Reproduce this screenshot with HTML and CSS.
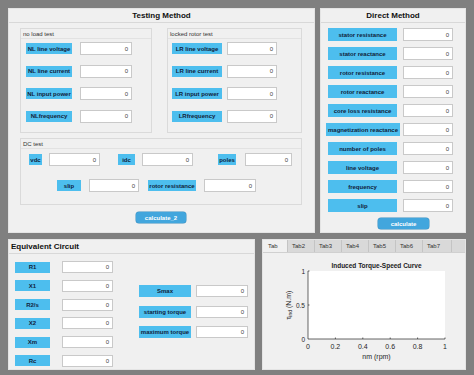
FILE: index.html
```html
<!DOCTYPE html>
<html>
<head>
<meta charset="utf-8">
<link rel="stylesheet" href="styles.css">
</head>
<body>
<div class="app">
  <div class="top">
    <section class="panel testing">
      <div class="ptitle">Testing Method</div>
      <div class="testing-body">
        <div class="toprow">
          <div class="group noload">
            <div class="gtitle">no load test</div>
            <div class="rows">
              <div class="row"><span class="lbl w46">NL line voltage</span><span class="inp w52">0</span></div>
              <div class="row"><span class="lbl w46">NL line current</span><span class="inp w52">0</span></div>
              <div class="row"><span class="lbl w46">NL input power</span><span class="inp w52">0</span></div>
              <div class="row"><span class="lbl w46">NLfrequency</span><span class="inp w52">0</span></div>
            </div>
          </div>
          <div class="group locked">
            <div class="gtitle">locked rotor test</div>
            <div class="rows">
              <div class="row"><span class="lbl w50">LR line voltage</span><span class="inp w50">0</span></div>
              <div class="row"><span class="lbl w50">LR line current</span><span class="inp w50">0</span></div>
              <div class="row"><span class="lbl w50">LR input power</span><span class="inp w50">0</span></div>
              <div class="row"><span class="lbl w50">LRfrequency</span><span class="inp w50">0</span></div>
            </div>
          </div>
        </div>
        <div class="group dc">
          <div class="gtitle">DC test</div>
          <div class="dcrow dc1">
            <span class="lbl sm w13">vdc</span><span class="inp w51">0</span>
            <span class="lbl sm w17 ml11">idc</span><span class="inp w51">0</span>
            <span class="lbl sm w18 ml18">poles</span><span class="inp w47 g9">0</span>
          </div>
          <div class="dcrow dc2">
            <span class="lbl sm w24">slip</span><span class="inp w50">0</span>
            <span class="lbl sm w48 ml1">rotor resistance</span><span class="inp w52">0</span>
          </div>
        </div>
        <div class="btnrow"><button class="btn b2">calculate_2</button></div>
      </div>
    </section>
    <section class="panel direct">
      <div class="ptitle">Direct Method</div>
      <div class="direct-body">
        <div class="dgrid">
          <span class="lbl dl">stator resistance</span><span class="inp">0</span>
          <span class="lbl dl">stator reactance</span><span class="inp">0</span>
          <span class="lbl dl">rotor resistance</span><span class="inp">0</span>
          <span class="lbl dl">rotor reactance</span><span class="inp">0</span>
          <span class="lbl dl">core loss resistance</span><span class="inp">0</span>
          <span class="lbl dl wide">magnetization reactance</span><span class="inp">0</span>
          <span class="lbl dl">number of poles</span><span class="inp">0</span>
          <span class="lbl dl">line voltage</span><span class="inp">0</span>
          <span class="lbl dl">frequency</span><span class="inp">0</span>
          <span class="lbl dl">slip</span><span class="inp">0</span>
        </div>
        <button class="btn b1">calculate</button>
      </div>
    </section>
  </div>
  <div class="bottom">
    <section class="panel equiv">
      <div class="ptitle left">Equivalent Circuit</div>
      <div class="equiv-body">
        <div class="ecol">
          <div class="erow"><span class="lbl w35">R1</span><span class="inp w51">0</span></div>
          <div class="erow"><span class="lbl w35">X1</span><span class="inp w51">0</span></div>
          <div class="erow"><span class="lbl w35">R2/s</span><span class="inp w51">0</span></div>
          <div class="erow"><span class="lbl w35">X2</span><span class="inp w51">0</span></div>
          <div class="erow"><span class="lbl w35">Xm</span><span class="inp w51">0</span></div>
          <div class="erow"><span class="lbl w35">Rc</span><span class="inp w51">0</span></div>
        </div>
        <div class="rcol">
          <div class="rrow"><span class="lbl w52">Smax</span><span class="inp w52">0</span></div>
          <div class="rrow"><span class="lbl w52">starting torque</span><span class="inp w52">0</span></div>
          <div class="rrow"><span class="lbl w52">maximum torque</span><span class="inp w52">0</span></div>
        </div>
      </div>
    </section>
    <section class="panel tabs">
      <div class="tabstrip">
        <span class="tab sel t1">Tab</span>
        <span class="tab">Tab2</span>
        <span class="tab">Tab3</span>
        <span class="tab">Tab4</span>
        <span class="tab">Tab5</span>
        <span class="tab">Tab6</span>
        <span class="tab t7">Tab7</span>
      </div>
      <div class="chart">
        <svg width="204" height="118" viewBox="0 0 204 118" xmlns="http://www.w3.org/2000/svg">
          <rect x="45" y="18" width="137" height="68" fill="#ffffff"/>
          <text class="ctitle" x="113.5" y="15" text-anchor="middle">Induced Torque-Speed Curve</text>
          <g stroke="#262626" stroke-width="0.7" fill="none">
            <path d="M45 18 V86 H182"/>
            <path d="M45 18 h1.5 M45 52 h1.5"/>
            <path d="M72.4 86 v-1.5 M99.8 86 v-1.5 M127.2 86 v-1.5 M154.6 86 v-1.5 M182 86 v-1.5"/>
          </g>
          <g class="tick ytick" text-anchor="end">
            <text x="42" y="20.5">1</text>
            <text x="42" y="54.5">0.5</text>
            <text x="42" y="88.5">0</text>
          </g>
          <g class="tick" text-anchor="middle">
            <text x="45" y="96">0</text>
            <text x="72.4" y="96">0.2</text>
            <text x="99.8" y="96">0.4</text>
            <text x="127.2" y="96">0.6</text>
            <text x="154.6" y="96">0.8</text>
            <text x="182" y="96">1</text>
          </g>
          <text class="tick" x="113.5" y="106" text-anchor="middle">nm (rpm)</text>
          <text class="tick" x="0" y="0" text-anchor="middle" transform="translate(28 52) rotate(-90)">τ<tspan font-size="5" dy="1.2">ind</tspan><tspan dy="-1.2"> (N.m)</tspan></text>
        </svg>
      </div>
    </section>
  </div>
</div>
</body>
</html>
```
FILE: styles.css
```css
* { box-sizing: border-box; }
html, body { margin: 0; padding: 0; }
body {
  background: #808080;
  font-family: "Liberation Sans", Arial, sans-serif;
  width: 474px;
  height: 375px;
  overflow: hidden;
}
.app {
  padding: 8px 0 0 8px;
  display: flex;
  flex-direction: column;
  gap: 6px;
}
.top { display: flex; gap: 5px; height: 225px; }
.bottom { display: flex; gap: 7px; height: 131px; }

.panel {
  background: #f0f0f0;
  display: flex;
  flex-direction: column;
  border: 1px solid #e4e4e4;
}
.testing { width: 307px; }
.direct { width: 146px; }
.equiv { width: 247px; }
.tabs { width: 204px; }

.ptitle {
  height: 14px;
  border-bottom: 1px solid #d8d8d8;
  font-weight: bold;
  font-size: 8px;
  line-height: 13px;
  text-align: center;
  color: #111;
}
.ptitle.left { text-align: left; padding-left: 2px; }

/* generic label & input */
.lbl {
  display: inline-flex;
  align-items: center;
  justify-content: center;
  background: #4dbeee;
  color: #10223a;
  font-weight: bold;
  font-size: 6px;
  height: 11px;
  white-space: nowrap;
  flex: none;
}
.inp {
  display: inline-flex;
  align-items: center;
  justify-content: flex-end;
  background: #fff;
  border: 1px solid #c9c9c9;
  color: #444;
  font-size: 6px;
  height: 13px;
  padding-right: 3px;
  flex: none;
}

.w13 { width: 13px; } .w17 { width: 17px; } .w18 { width: 18px; }
.w24 { width: 24px; } .w35 { width: 35px; } .w46 { width: 46px; }
.w47 { width: 47px; } .w48 { width: 48px; } .w50 { width: 50px; }
.w51 { width: 51px; } .w52 { width: 52px; }
.ml1 { margin-left: 1px; } .ml11 { margin-left: 11px; } .ml18 { margin-left: 18px; }

/* testing method */
.testing-body { padding: 5px 12px 0 11px; display: flex; flex-direction: column; }
.toprow { display: flex; gap: 15px; height: 105px; }
.group { border: 1px solid #dadada; display: flex; flex-direction: column; }
.noload { width: 132px; }
.locked { width: 135px; }
.gtitle {
  height: 10px;
  font-size: 6px;
  line-height: 10px;
  color: #333;
  padding-left: 2px;
  border-bottom: 1px solid #e2e2e2;
}
.rows { display: flex; flex-direction: column; gap: 9.5px; padding-top: 3px; }
.row { display: flex; align-items: center; height: 13px; }
.noload .row { padding-left: 5px; gap: 8px; }
.locked .row { padding-left: 4px; gap: 5px; }

.dc { margin-top: 5px; height: 67px; }
.dcrow { display: flex; align-items: center; gap: 7px; height: 13px; }
.dc1 { padding-left: 8px; margin-top: 4px; }
.dc1 .g9 { margin-left: 2px; }
.dc2 { padding-left: 36px; margin-top: 13px; gap: 8px; }
.lbl.sm { height: 11px; }

.btnrow { display: flex; justify-content: center; margin-top: 7px; }
.btn {
  border: none;
  background: #42a6dd;
  color: #fff;
  font-family: "Liberation Sans", Arial, sans-serif;
  font-weight: bold;
  font-size: 6px;
  height: 11px;
  border-radius: 3px;
  padding: 0;
  box-shadow: 0 0 0 0.5px #3b8fc0;
}
.b2 { width: 50px; }
.b1 { width: 51px; margin: 6px 0 0 50px; }

/* direct method */
.direct-body { padding: 5px 0 0 7px; display: flex; flex-direction: column; }
.dgrid {
  display: grid;
  grid-template-columns: 69px 50px;
  column-gap: 6px;
  row-gap: 6px;
}
.dgrid .lbl, .dgrid .inp { height: 13px; }
.dl.wide { width: 74px; margin-left: -2px; }

/* equivalent circuit */
.equiv-body { display: flex; }
.ecol { display: flex; flex-direction: column; gap: 6.8px; padding: 7px 0 0 6px; }
.erow { display: flex; align-items: center; gap: 12px; height: 12px; }
.erow .inp { height: 12px; }
.rcol { display: flex; flex-direction: column; gap: 8.5px; padding: 31px 0 0 26px; }
.rrow { display: flex; align-items: center; gap: 5px; height: 12px; }
.rrow .lbl, .rrow .inp { height: 12px; }

/* tabs */
.tabstrip {
  display: flex;
  height: 13px;
  background: #d9d9d9;
  border-bottom: 1px solid #d0d0d0;
}
.tab {
  width: 27px;
  font-size: 6px;
  color: #333;
  line-height: 12px;
  padding-left: 4px;
  border-right: 1px solid #c4c4c4;
}
.tab.t1 { width: 25px; padding-left: 5px; }
.tab.t7 { width: 29px; }
.tab.sel { background: #f0f0f0; }
.chart { flex: 1; }
.chart svg { display: block; }
.ctitle { font-family: "Liberation Sans", Arial, sans-serif; font-weight: bold; font-size: 6.5px; fill: #222; }
.tick { font-family: "Liberation Sans", Arial, sans-serif; font-size: 7px; fill: #262626; }
.ytick { font-size: 6.5px; }
```
